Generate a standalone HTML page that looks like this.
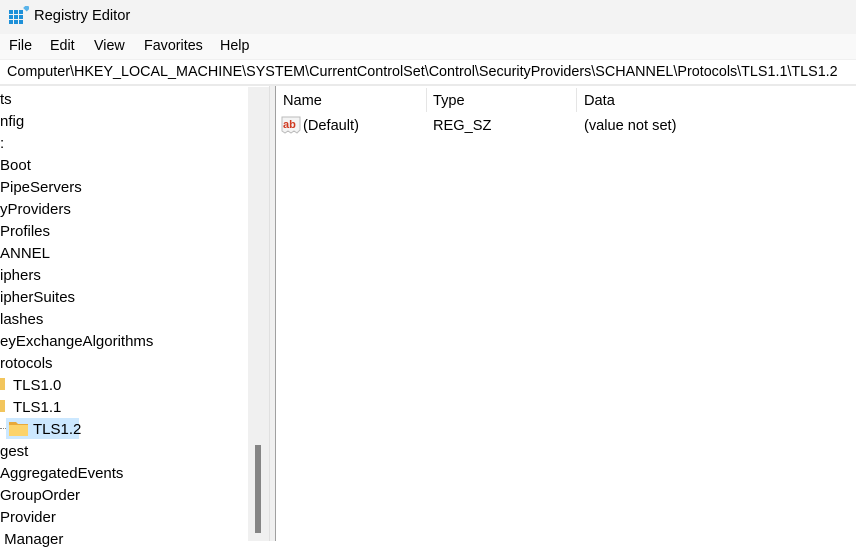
<!DOCTYPE html>
<html><head><style>
*{margin:0;padding:0;box-sizing:border-box}
body{width:856px;height:541px;overflow:hidden;background:#fff;font-family:"Liberation Sans",sans-serif;font-size:14px;color:#000;position:relative}
.a{position:absolute;white-space:nowrap}
</style></head><body>
<div class="a" style="left:0;top:0;width:856px;height:34px;background:#f3f3f3"></div>
<svg class="a" style="left:9px;top:6px" width="20" height="20" viewBox="0 0 20 20">
<g fill="#1e90d8"><rect x="0" y="4" width="4" height="4"/><rect x="5" y="4" width="4" height="4"/><rect x="10" y="4" width="4" height="4"/>
<rect x="0" y="9" width="4" height="4"/><rect x="5" y="9" width="4" height="4"/><rect x="10" y="9" width="4" height="4"/>
<rect x="0" y="14" width="4" height="4"/><rect x="5" y="14" width="4" height="4"/><rect x="10" y="14" width="4" height="4"/></g>
<rect x="15" y="-1" width="5" height="5" fill="#5ab4ea" transform="rotate(45 17 2)"/>
</svg>
<div class="a" style="left:34px;top:8px;font-size:14.7px">Registry Editor</div>
<div class="a" style="left:0;top:34px;width:856px;height:25px;background:#f9f9f9"></div>
<div style="font-size:14.3px">
<div class="a" style="left:9px;top:38px">File</div>
<div class="a" style="left:50px;top:38px">Edit</div>
<div class="a" style="left:94px;top:38px">View</div>
<div class="a" style="left:144px;top:38px">Favorites</div>
<div class="a" style="left:220px;top:38px">Help</div>
</div>
<div class="a" style="left:0;top:59px;width:856px;height:27px;background:#fff;border-top:1px solid #f0f0f0;border-bottom:2px solid #eaeaea"></div>
<div class="a" style="left:7px;top:64px;font-size:14.35px">Computer\HKEY_LOCAL_MACHINE\SYSTEM\CurrentControlSet\Control\SecurityProviders\SCHANNEL\Protocols\TLS1.1\TLS1.2</div>
<div class="a" style="left:248px;top:87px;width:21px;height:454px;background:#f0f0f0"></div>
<div class="a" style="left:255px;top:445px;width:6px;height:88px;background:#858585"></div>
<div class="a" style="left:269px;top:86px;width:1px;height:455px;background:#e0e0e0"></div>
<div class="a" style="left:270px;top:86px;width:5px;height:455px;background:#f0f0f0"></div>
<div class="a" style="left:275px;top:86px;width:1px;height:455px;background:#a0a0a0"></div>
<div class="a" style="left:426px;top:88px;width:1px;height:24px;background:#e5e5e5"></div>
<div class="a" style="left:576px;top:88px;width:1px;height:24px;background:#e5e5e5"></div>
<div style="font-size:14.6px">
<div class="a" style="left:283px;top:93px">Name</div>
<div class="a" style="left:433px;top:93px">Type</div>
<div class="a" style="left:584px;top:93px">Data</div>
<div class="a" style="left:303px;top:118px">(Default)</div>
<div class="a" style="left:433px;top:118px">REG_SZ</div>
<div class="a" style="left:584px;top:118px">(value not set)</div>
</div>
<svg class="a" style="left:281px;top:116px" width="20" height="18" viewBox="0 0 20 18"><path d="M1 1h18v13l-3 3-3-2-3 2-3-2-3 2-3-2z" fill="#f4f4f4" stroke="#bbb"/><text x="2" y="12" font-size="11" font-weight="bold" fill="#d03a20" font-family="Liberation Sans">ab</text></svg>
<div class="a" style="left:0;top:89px;line-height:22px;font-size:15px">
<div>ts</div><div>nfig</div><div>:</div><div>Boot</div><div>PipeServers</div><div>yProviders</div><div>Profiles</div><div>ANNEL</div><div>iphers</div><div>ipherSuites</div><div>lashes</div><div>eyExchangeAlgorithms</div><div>rotocols</div>
<div style="padding-left:13px">TLS1.0</div><div style="padding-left:13px">TLS1.1</div><div style="padding-left:33px">TLS1.2</div>
<div>gest</div><div>AggregatedEvents</div><div>GroupOrder</div><div>Provider</div><div>&nbsp;Manager</div></div>
<div class="a" style="left:6px;top:418px;width:73px;height:21px;background:#cce8ff;z-index:-1"></div>
<div class="a" style="left:0;top:378px;width:5px;height:12px;background:#f2c55c"></div>
<div class="a" style="left:0;top:400px;width:5px;height:12px;background:#f2c55c"></div>
<div class="a" style="left:0;top:428px;width:6px;border-top:1px dotted #888"></div>
<svg class="a" style="left:9px;top:421px" width="19" height="15" viewBox="0 0 19 15"><path d="M0 1h7l2 2h10v12H0z" fill="#e8a93a"/><rect x="0" y="4" width="19" height="11" fill="#fcd36a"/></svg>
</body></html>
